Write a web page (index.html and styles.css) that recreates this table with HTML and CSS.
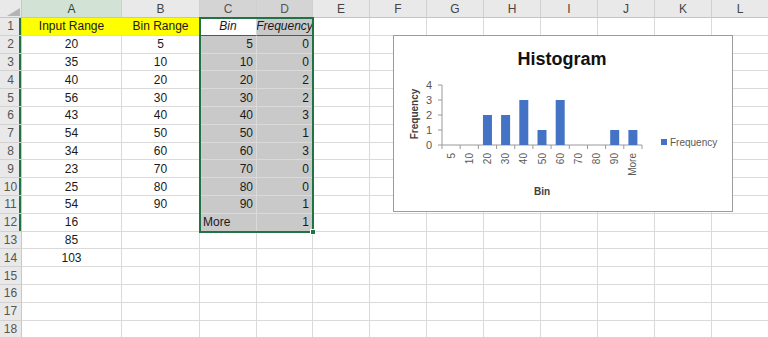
FILE: index.html
```html
<!DOCTYPE html>
<html>
<head>
<meta charset="utf-8">
<link rel="stylesheet" href="styles.css">
</head>
<body>
<div class="sheet">
  <div class="corner"><svg class="tri" width="13" height="8" viewBox="0 0 13 8"><path d="M13 0V8H0Z" fill="#b4b4b4"/></svg></div>
  <div class="ch on">A</div><div class="ch">B</div><div class="ch dk">C</div><div class="ch dk">D</div><div class="ch">E</div><div class="ch">F</div><div class="ch">G</div><div class="ch">H</div><div class="ch">I</div><div class="ch">J</div><div class="ch">K</div><div class="ch">L</div>

  <div class="rh s">1</div><div class="c ctr yel join">Input Range</div><div class="c ctr yel">Bin Range</div><div class="c ctr hd">Bin</div><div class="c ctr hd g">Frequency</div><div class="c"></div><div class="c"></div><div class="c"></div><div class="c"></div><div class="c"></div><div class="c"></div><div class="c"></div><div class="c"></div>
  <div class="rh s">2</div><div class="c ctr">20</div><div class="c ctr">5</div><div class="c r g">5</div><div class="c r g">0</div><div class="c"></div><div class="c"></div><div class="c"></div><div class="c"></div><div class="c"></div><div class="c"></div><div class="c"></div><div class="c"></div>
  <div class="rh s">3</div><div class="c ctr">35</div><div class="c ctr">10</div><div class="c r g">10</div><div class="c r g">0</div><div class="c"></div><div class="c"></div><div class="c"></div><div class="c"></div><div class="c"></div><div class="c"></div><div class="c"></div><div class="c"></div>
  <div class="rh s">4</div><div class="c ctr">40</div><div class="c ctr">20</div><div class="c r g">20</div><div class="c r g">2</div><div class="c"></div><div class="c"></div><div class="c"></div><div class="c"></div><div class="c"></div><div class="c"></div><div class="c"></div><div class="c"></div>
  <div class="rh s">5</div><div class="c ctr">56</div><div class="c ctr">30</div><div class="c r g">30</div><div class="c r g">2</div><div class="c"></div><div class="c"></div><div class="c"></div><div class="c"></div><div class="c"></div><div class="c"></div><div class="c"></div><div class="c"></div>
  <div class="rh s">6</div><div class="c ctr">43</div><div class="c ctr">40</div><div class="c r g">40</div><div class="c r g">3</div><div class="c"></div><div class="c"></div><div class="c"></div><div class="c"></div><div class="c"></div><div class="c"></div><div class="c"></div><div class="c"></div>
  <div class="rh s">7</div><div class="c ctr">54</div><div class="c ctr">50</div><div class="c r g">50</div><div class="c r g">1</div><div class="c"></div><div class="c"></div><div class="c"></div><div class="c"></div><div class="c"></div><div class="c"></div><div class="c"></div><div class="c"></div>
  <div class="rh s">8</div><div class="c ctr">34</div><div class="c ctr">60</div><div class="c r g">60</div><div class="c r g">3</div><div class="c"></div><div class="c"></div><div class="c"></div><div class="c"></div><div class="c"></div><div class="c"></div><div class="c"></div><div class="c"></div>
  <div class="rh s">9</div><div class="c ctr">23</div><div class="c ctr">70</div><div class="c r g">70</div><div class="c r g">0</div><div class="c"></div><div class="c"></div><div class="c"></div><div class="c"></div><div class="c"></div><div class="c"></div><div class="c"></div><div class="c"></div>
  <div class="rh s">10</div><div class="c ctr">25</div><div class="c ctr">80</div><div class="c r g">80</div><div class="c r g">0</div><div class="c"></div><div class="c"></div><div class="c"></div><div class="c"></div><div class="c"></div><div class="c"></div><div class="c"></div><div class="c"></div>
  <div class="rh s">11</div><div class="c ctr">54</div><div class="c ctr">90</div><div class="c r g">90</div><div class="c r g">1</div><div class="c"></div><div class="c"></div><div class="c"></div><div class="c"></div><div class="c"></div><div class="c"></div><div class="c"></div><div class="c"></div>
  <div class="rh s">12</div><div class="c ctr">16</div><div class="c"></div><div class="c g">More</div><div class="c r g">1</div><div class="c"></div><div class="c"></div><div class="c"></div><div class="c"></div><div class="c"></div><div class="c"></div><div class="c"></div><div class="c"></div>
  <div class="rh">13</div><div class="c ctr">85</div><div class="c"></div><div class="c"></div><div class="c"></div><div class="c"></div><div class="c"></div><div class="c"></div><div class="c"></div><div class="c"></div><div class="c"></div><div class="c"></div><div class="c"></div>
  <div class="rh">14</div><div class="c ctr">103</div><div class="c"></div><div class="c"></div><div class="c"></div><div class="c"></div><div class="c"></div><div class="c"></div><div class="c"></div><div class="c"></div><div class="c"></div><div class="c"></div><div class="c"></div>
  <div class="rh">15</div><div class="c"></div><div class="c"></div><div class="c"></div><div class="c"></div><div class="c"></div><div class="c"></div><div class="c"></div><div class="c"></div><div class="c"></div><div class="c"></div><div class="c"></div><div class="c"></div>
  <div class="rh">16</div><div class="c"></div><div class="c"></div><div class="c"></div><div class="c"></div><div class="c"></div><div class="c"></div><div class="c"></div><div class="c"></div><div class="c"></div><div class="c"></div><div class="c"></div><div class="c"></div>
  <div class="rh">17</div><div class="c"></div><div class="c"></div><div class="c"></div><div class="c"></div><div class="c"></div><div class="c"></div><div class="c"></div><div class="c"></div><div class="c"></div><div class="c"></div><div class="c"></div><div class="c"></div>
  <div class="rh">18</div><div class="c"></div><div class="c"></div><div class="c"></div><div class="c"></div><div class="c"></div><div class="c"></div><div class="c"></div><div class="c"></div><div class="c"></div><div class="c"></div><div class="c"></div><div class="c"></div>

  <div class="selbox"><div class="handle"></div></div>

  <div class="chart">
    <svg width="338" height="175" viewBox="1 1 338 175">
      <text x="169" y="29.5" class="title" text-anchor="middle">Histogram</text>
      <g class="tick">
        <text x="39" y="54" text-anchor="end">4</text>
        <text x="39" y="69" text-anchor="end">3</text>
        <text x="39" y="84" text-anchor="end">2</text>
        <text x="39" y="99" text-anchor="end">1</text>
        <text x="39" y="114" text-anchor="end">0</text>
      </g>
      <g class="axis">
        <path d="M49 50V110H249"/>
        <path d="M45 50H49M45 65H49M45 80H49M45 95H49M45 110H49"/>
        <path d="M49 110V114M67.18 110V114M85.36 110V114M103.55 110V114M121.73 110V114M139.9 110V114M158.1 110V114M176.3 110V114M194.5 110V114M212.6 110V114M230.8 110V114M249 110V114"/>
      </g>
      <g fill="#4472c4">
        <rect x="89.95" y="80" width="9" height="30"/>
        <rect x="108.1" y="80" width="9" height="30"/>
        <rect x="126.3" y="65" width="9" height="45"/>
        <rect x="144.5" y="95" width="9" height="15"/>
        <rect x="162.7" y="65" width="9" height="45"/>
        <rect x="217.2" y="95" width="9" height="15"/>
        <rect x="235.4" y="95" width="9" height="15"/>
      </g>
      <g class="xl" text-anchor="end">
        <text transform="translate(58.1 118) rotate(-90)">5</text>
        <text transform="translate(76.3 118) rotate(-90)">10</text>
        <text transform="translate(94.5 118) rotate(-90)">20</text>
        <text transform="translate(112.6 118) rotate(-90)">30</text>
        <text transform="translate(130.8 118) rotate(-90)">40</text>
        <text transform="translate(149 118) rotate(-90)">50</text>
        <text transform="translate(167.2 118) rotate(-90)">60</text>
        <text transform="translate(185.4 118) rotate(-90)">70</text>
        <text transform="translate(203.5 118) rotate(-90)">80</text>
        <text transform="translate(221.7 118) rotate(-90)">90</text>
        <text transform="translate(239.9 118) rotate(-90)">More</text>
      </g>
      <text class="axt" x="149" y="159.5" text-anchor="middle">Bin</text>
      <text class="axt" transform="translate(21 79) rotate(-90)" text-anchor="middle" dominant-baseline="central">Frequency</text>
      <rect x="268" y="104" width="6" height="6" fill="#4472c4"/>
      <text class="leg" x="277" y="110.5">Frequency</text>
    </svg>
  </div>
</div>
</body>
</html>
```
FILE: styles.css
```css
* { box-sizing: border-box; margin: 0; padding: 0; }
html, body { width: 768px; height: 337px; overflow: hidden; background: #fff; }
body { font-family: "Liberation Sans", Arial, sans-serif; font-size: 12px; color: #1a1a1a; }

.sheet {
  position: relative;
  display: grid;
  grid-template-columns: 22px 100px 78px 57px 56px 57px 57px 57px 57px 57px 57px 57px 57px;
  grid-template-rows: 18px;
  grid-auto-rows: 17.8px;
}

.corner {
  background: #e9e9e9;
  border-right: 1px solid #c8c8c8;
  border-bottom: 1px solid #c4c4c4;
  display: flex;
  align-items: flex-end;
  justify-content: flex-end;
  padding: 0 1px 1px 0;
}
.tri { display: block; }

.ch {
  background: #e9e9e9;
  border-right: 1px solid #d0d0d0;
  border-bottom: 1px solid #c4c4c4;
  display: flex;
  align-items: center;
  justify-content: center;
  color: #444;
}
.ch.on { background: #d2e3d6; color: #2a4a36; }
.ch.dk { background: #d4d4d4; color: #555; }

.rh {
  background: #e9e9e9;
  border-right: 1px solid #c8c8c8;
  border-bottom: 1px solid #d2d2d2;
  display: flex;
  align-items: center;
  justify-content: center;
  color: #555;
}
.rh.s { box-shadow: inset -2px 0 0 #217346; }

.c {
  border-right: 1px solid #dadada;
  border-bottom: 1px solid #dadada;
  display: flex;
  align-items: center;
  padding: 0 3px;
  white-space: nowrap;
  overflow: hidden;
}
.ctr { justify-content: center; }
.r { justify-content: flex-end; }
.yel { background: #ffff00; }
.yel.join { border-right-color: #ffff00; }
.g { background: #c9c9c9; }
.hd { font-style: italic; border-bottom: 1px solid #555; }

.selbox {
  position: absolute;
  grid-column: 4 / 6;
  grid-row: 2 / 14;
  top: -1px;
  left: -1px;
  right: -1px;
  bottom: -1px;
  border: 2px solid #217346;
  z-index: 2;
  pointer-events: none;
}
.handle {
  position: absolute;
  right: -4px;
  bottom: -4px;
  width: 6px;
  height: 6px;
  background: #217346;
  border: 1px solid #fff;
}

.chart {
  position: absolute;
  left: 393px;
  top: 35px;
  width: 340px;
  height: 177px;
  border: 1px solid #9c9c9c;
  background: #fff;
  z-index: 3;
}
.chart svg { display: block; font-family: "Liberation Sans", Arial, sans-serif; }
.title { font-size: 18px; font-weight: bold; fill: #111; }
.tick text { font-size: 11px; fill: #595959; }
.axis path { stroke: #9a9a9a; stroke-width: 1; fill: none; }
.xl text { font-size: 10px; fill: #595959; dominant-baseline: central; }
.axt { font-size: 10px; font-weight: bold; fill: #404040; }
.leg { font-size: 10px; fill: #595959; }
```
